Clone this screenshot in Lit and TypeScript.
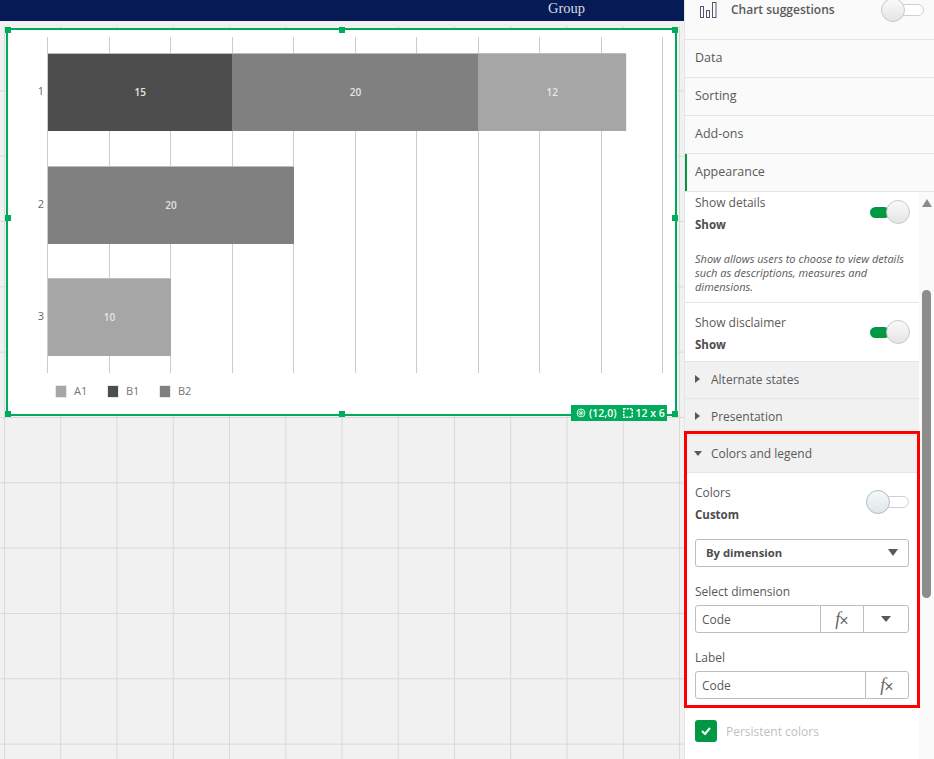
import { LitElement, html, svg, css } from 'lit';
import { customElement, property } from 'lit/decorators.js';

// values per row, in the order they are stacked
const COLORS: Record<string, string> = { A1: '#a6a6a6', B1: '#4d4d4d', B2: '#808080' };
const ROWS = [
  { label: '1', top: 54, parts: [{ key: 'B1', value: 15 }, { key: 'B2', value: 20 }, { key: 'A1', value: 12 }] },
  { label: '2', top: 167, parts: [{ key: 'B2', value: 20 }] },
  { label: '3', top: 279, parts: [{ key: 'A1', value: 10 }] },
];
const UNIT = 12.3;
const BAR_H = 78;
const AXIS_X = 48;

@customElement('toggle-switch')
class ToggleSwitch extends LitElement {
  static styles = css`
    :host {
      display: block;
      position: relative;
      width: 43px;
      height: 24px;
      flex: none;
    }
    .track {
      position: absolute;
      top: 6px;
      left: 10px;
      right: 0;
      height: 12px;
      box-sizing: border-box;
      border: 1px solid #d0d0d0;
      border-radius: 6px;
      background: #fff;
    }
    .knob {
      position: absolute;
      top: 0;
      left: 0;
      width: 24px;
      height: 24px;
      box-sizing: border-box;
      border: 1px solid #c8c8c8;
      border-radius: 50%;
      background: linear-gradient(#fafafa, #e4e4e4);
    }
    :host([on]) .track {
      top: 7px;
      left: 3px;
      right: 20px;
      height: 11px;
      border: none;
      background: #009845;
    }
    :host([on]) .knob {
      left: 19px;
    }
    :host([focused]) .knob {
      border-color: #a6bfcc;
      background: linear-gradient(#f6f8f9, #e2e6e8);
    }
  `;

  @property({ type: Boolean, reflect: true }) on = false;
  @property({ type: Boolean, reflect: true }) focused = false;

  render() {
    return html`<div class="track"></div><div class="knob"></div>`;
  }
}

@customElement('app-root')
class AppRoot extends LitElement {
  static styles = css`
    :host {
      display: flex;
      width: 934px;
      height: 759px;
      overflow: hidden;
      position: relative;
      font-family: 'Open Sans', sans-serif;
      font-size: 12px;
      color: #595959;
    }
    .main {
      width: 684px;
      flex: none;
      display: flex;
      flex-direction: column;
      background: #f1f1f1;
    }
    .topbar {
      height: 21px;
      flex: none;
      background: #061a55;
      color: #d8dbe6;
      font-family: 'Liberation Serif', serif;
      font-size: 14.5px;
      line-height: 17px;
      padding-left: 548px;
      box-sizing: border-box;
    }
    .grid {
      flex: 1;
      margin-top: 5px;
      padding: 2px 0 0 6px;
      background-image:
        linear-gradient(to right, #d9d9d9 1px, transparent 1px),
        linear-gradient(to top, #d9d9d9 1px, transparent 1px);
      background-size: 56.25px 65.33px;
      background-position: 4px 0, 0 0;
    }
    .card {
      position: relative;
      width: 671px;
      height: 388px;
      box-sizing: border-box;
      border: 2px solid #00ac5c;
      background: #fff;
    }
    .card svg {
      display: block;
    }
    .handle {
      position: absolute;
      width: 6px;
      height: 6px;
      background: #00ac5c;
    }
    .legend {
      display: flex;
      padding: 10px 0 0 48px;
      font-size: 11px;
      color: #757575;
      line-height: 12px;
    }
    .legend-item {
      width: 52px;
      display: flex;
      align-items: center;
      gap: 8px;
    }
    .swatch {
      width: 10px;
      height: 11px;
      box-shadow: 0 0 0 0.5px #cfcfcf;
    }
    .badge {
      position: absolute;
      right: 8px;
      bottom: -7px;
      height: 16px;
      width: 96px;
      box-sizing: border-box;
      display: flex;
      align-items: center;
      padding-left: 5px;
      gap: 3px;
      background: #00ac5c;
      color: #fff;
      font-size: 10.5px;
      font-weight: 600;
      white-space: nowrap;
    }
    .badge .size {
      margin-left: 3px;
      flex: none;
    }
    .badge svg {
      flex: none;
    }
    .panel {
      flex: 1;
      display: flex;
      flex-direction: column;
      background: #fafafa;
      border-left: 1px solid #e5e5e5;
      min-width: 0;
    }
    .nav-row {
      height: 38px;
      flex: none;
      box-sizing: border-box;
      border-bottom: 1px solid #e5e5e5;
      padding: 0 10px 3px;
      display: flex;
      align-items: center;
      color: #595959;
      font-size: 12.5px;
    }
    .nav-row.first {
      height: 40px;
      align-items: flex-start;
      padding-left: 15px;
    }
    .nav-row.first b {
      margin: 0 0 0 14px;
      flex: 1;
      line-height: 19px;
      font-weight: 600;
      font-size: 12px;
    }
    .nav-row.first toggle-switch {
      margin-top: -2px;
    }
    .nav-row.first svg {
      margin-top: 2px;
    }
    .nav-row.active {
      box-shadow: inset 2px 0 0 #009845;
    }
    .scroller {
      flex: 1;
      display: flex;
      min-height: 0;
    }
    .content {
      width: 234px;
      flex: none;
      padding-top: 1px;
      background: #fff;
      overflow: hidden;
    }
    .setting {
      display: flex;
      justify-content: space-between;
      padding: 0 9px 0 10px;
    }
    .setting .name {
      line-height: 20px;
    }
    .setting .value {
      margin-top: 2px;
      line-height: 20px;
      font-size: 11.5px;
      font-weight: 700;
      color: #4d4d4d;
    }
    .setting toggle-switch {
      margin-top: 7px;
    }
    .note {
      margin: 17px 0 0;
      padding: 0 10px 8px;
      font-size: 11px;
      line-height: 14px;
      font-style: italic;
      border-bottom: 1px solid #e5e5e5;
    }
    .disclaimer {
      padding-top: 10px;
      padding-bottom: 6px;
    }
    .section-head {
      height: 37px;
      box-sizing: border-box;
      border-top: 1px solid #e5e5e5;
      background: #f1f1f1;
      display: flex;
      align-items: center;
      padding: 0 0 2px 10px;
      color: #595959;
    }
    .section-head .tri-box {
      width: 16px;
      flex: none;
    }
    .section-head.open {
      height: 38px;
      border-bottom: 1px solid #e5e5e5;
    }
    .tri-right {
      display: block;
      width: 0;
      height: 0;
      border-left: 5px solid #595959;
      border-top: 4px solid transparent;
      border-bottom: 4px solid transparent;
    }
    .tri-down {
      display: block;
      margin-left: -1px;
      width: 0;
      height: 0;
      border-top: 5px solid #595959;
      border-left: 4px solid transparent;
      border-right: 4px solid transparent;
    }
    .colors {
      padding-top: 10px;
    }
    .colors .setting {
      padding-right: 10px;
    }
    .field {
      padding: 0 10px;
    }
    .select {
      margin-top: 14px;
      height: 28px;
      box-sizing: border-box;
      border: 1px solid #bdbdbd;
      border-radius: 3px;
      display: flex;
      align-items: center;
      justify-content: space-between;
      padding: 0 10px 1px;
      font-size: 11.3px;
      font-weight: 700;
      color: #4d4d4d;
    }
    .arrow {
      width: 0;
      height: 0;
      border-top: 7px solid #595959;
      border-left: 5px solid transparent;
      border-right: 5px solid transparent;
    }
    .field-label {
      margin-top: 15px;
      height: 23px;
      line-height: 20px;
    }
    .input {
      height: 28px;
      box-sizing: border-box;
      border: 1px solid #bdbdbd;
      border-radius: 3px;
      display: flex;
      align-items: stretch;
    }
    .input .text {
      flex: 1;
      line-height: 28px;
      padding-left: 6px;
    }
    .input .cell {
      flex: none;
      border-left: 1px solid #bdbdbd;
      display: flex;
      align-items: center;
      justify-content: center;
    }
    .fx {
      width: 42px;
      font-family: 'Liberation Serif', serif;
      font-size: 18px;
      color: #666;
    }
    .fx .times {
      font-family: 'Liberation Sans', sans-serif;
      font-size: 16px;
      font-weight: 300;
      margin-left: -1px;
      line-height: 1;
      padding-top: 3px;
    }
    .drop {
      width: 44px;
    }
    .drop .arrow {
      border-top-width: 6px;
    }
    .persist {
      margin-top: 21px;
      padding: 0 10px;
      display: flex;
      align-items: center;
      gap: 9px;
      color: #bfbfbf;
    }
    .check {
      width: 22px;
      height: 22px;
      border-radius: 3px;
      background: #009845;
      display: flex;
      align-items: center;
      justify-content: center;
    }
    .scrollbar {
      flex: 1;
      display: flex;
      flex-direction: column;
      align-items: center;
    }
    .scrollbar .up {
      margin-top: 7px;
      width: 0;
      height: 0;
      border-bottom: 8px solid #8c8c8c;
      border-left: 5px solid transparent;
      border-right: 5px solid transparent;
    }
    .thumb {
      margin-top: 83px;
      width: 9px;
      height: 308px;
      border-radius: 5px;
      background: #8c8c8c;
    }
    .annotation {
      position: absolute;
      left: 684px;
      top: 431px;
      width: 236px;
      height: 277px;
      box-sizing: border-box;
      border: 3px solid #f00;
      pointer-events: none;
    }
  `;

  private renderChart() {
    const lines = Array.from({ length: 11 }, (_, i) => Math.round(47 + 61.5 * i) + 0.5);
    // viewBox is in page coordinates so the numbers read off the chart directly
    return html`<svg width="667" height="345" viewBox="8 30 667 345">
      ${lines.map((x) => svg`<line x1=${x} x2=${x} y1="37" y2="373" stroke="#ccc" />`)}
      ${ROWS.map((row) => {
        let x = AXIS_X;
        const total = row.parts.reduce((sum, p) => sum + p.value, 0);
        return svg`
          <text x="41" y=${row.top + 41} text-anchor="middle" font-size="11" fill="#666">${row.label}</text>
          <rect x=${x} y=${row.top - 1} width=${total * UNIT} height=${BAR_H} fill="#bdbdbd" />
          ${row.parts.map((p) => {
            const w = p.value * UNIT;
            const part = svg`
              <rect x=${x} y=${row.top} width=${w} height=${BAR_H - 1} fill=${COLORS[p.key]} />
              <text x=${x + w / 2} y=${row.top + 42} text-anchor="middle" font-size="10" font-weight="600" fill="#e6e6e6">${p.value}</text>`;
            x += w;
            return part;
          })}`;
      })}
    </svg>`;
  }

  private renderFx() {
    return html`<span class="cell fx"><i>f</i><span class="times">×</span></span>`;
  }

  render() {
    return html`
      <div class="main">
        <div class="topbar">Group</div>
        <div class="grid">
          <div class="card">
            ${this.renderChart()}
            <div class="legend">
              ${Object.keys(COLORS).map(
                (k) => html`<div class="legend-item"><span class="swatch" style="background:${COLORS[k]}"></span>${k}</div>`
              )}
            </div>
            <span class="handle" style="left:-3px;top:-3px"></span>
            <span class="handle" style="left:331px;top:-3px"></span>
            <span class="handle" style="right:-3px;top:-3px"></span>
            <span class="handle" style="left:-3px;top:185px"></span>
            <span class="handle" style="right:-3px;top:185px"></span>
            <span class="handle" style="left:-3px;bottom:-3px"></span>
            <span class="handle" style="left:331px;bottom:-3px"></span>
            <span class="handle" style="right:-3px;bottom:-3px"></span>
            <div class="badge">
              <svg width="10" height="10" viewBox="0 0 10 10" fill="none" stroke="#bfeed6" stroke-width="1">
                <circle cx="5" cy="5" r="4" />
                <path d="M5 1v8M1 5h8M2.5 2.5l5 5M7.5 2.5l-5 5" />
              </svg>
              <span>(12,0)</span>
              <svg class="size" width="10" height="10" viewBox="0 0 10 10" fill="none" stroke="#fff" stroke-width="1.5" stroke-dasharray="2 1">
                <rect x="0.75" y="0.75" width="8.5" height="8.5" />
              </svg>
              <span>12 x 6</span>
            </div>
          </div>
        </div>
      </div>
      <div class="panel">
        <div class="nav-row first">
          <svg width="17" height="16" viewBox="0 0 17 16" fill="none" stroke="#5b5470" stroke-width="1">
            <rect x="0.5" y="4.5" width="3" height="11" />
            <rect x="6.5" y="8.5" width="3" height="7" />
            <rect x="12.5" y="0.5" width="3.5" height="15" />
          </svg>
          <b>Chart suggestions</b>
          <toggle-switch></toggle-switch>
        </div>
        <div class="nav-row">Data</div>
        <div class="nav-row">Sorting</div>
        <div class="nav-row">Add-ons</div>
        <div class="nav-row active">Appearance</div>
        <div class="scroller">
          <div class="content">
            <div class="setting">
              <div>
                <div class="name">Show details</div>
                <div class="value">Show</div>
              </div>
              <toggle-switch on></toggle-switch>
            </div>
            <p class="note">Show allows users to choose to view details such as descriptions, measures and dimensions.</p>
            <div class="setting disclaimer">
              <div>
                <div class="name">Show disclaimer</div>
                <div class="value">Show</div>
              </div>
              <toggle-switch on></toggle-switch>
            </div>
            <div class="section-head"><span class="tri-box"><span class="tri-right"></span></span>Alternate states</div>
            <div class="section-head"><span class="tri-box"><span class="tri-right"></span></span>Presentation</div>
            <div class="section-head open"><span class="tri-box"><span class="tri-down"></span></span>Colors and legend</div>
            <div class="colors">
              <div class="setting">
                <div>
                  <div class="name">Colors</div>
                  <div class="value">Custom</div>
                </div>
                <toggle-switch focused></toggle-switch>
              </div>
              <div class="field">
                <div class="select">By dimension<span class="arrow"></span></div>
                <div class="field-label">Select dimension</div>
                <div class="input">
                  <span class="text">Code</span>
                  ${this.renderFx()}
                  <span class="cell drop"><span class="arrow"></span></span>
                </div>
                <div class="field-label">Label</div>
                <div class="input">
                  <span class="text">Code</span>
                  ${this.renderFx()}
                </div>
              </div>
              <div class="persist">
                <span class="check">
                  <svg width="10" height="8" viewBox="0 0 10 8" fill="none" stroke="#fff" stroke-width="2">
                    <path d="M1 4l3 3 5-6" />
                  </svg>
                </span>
                Persistent colors
              </div>
            </div>
          </div>
          <div class="scrollbar">
            <span class="up"></span>
            <span class="thumb"></span>
          </div>
        </div>
      </div>
      <div class="annotation"></div>
    `;
  }
}
